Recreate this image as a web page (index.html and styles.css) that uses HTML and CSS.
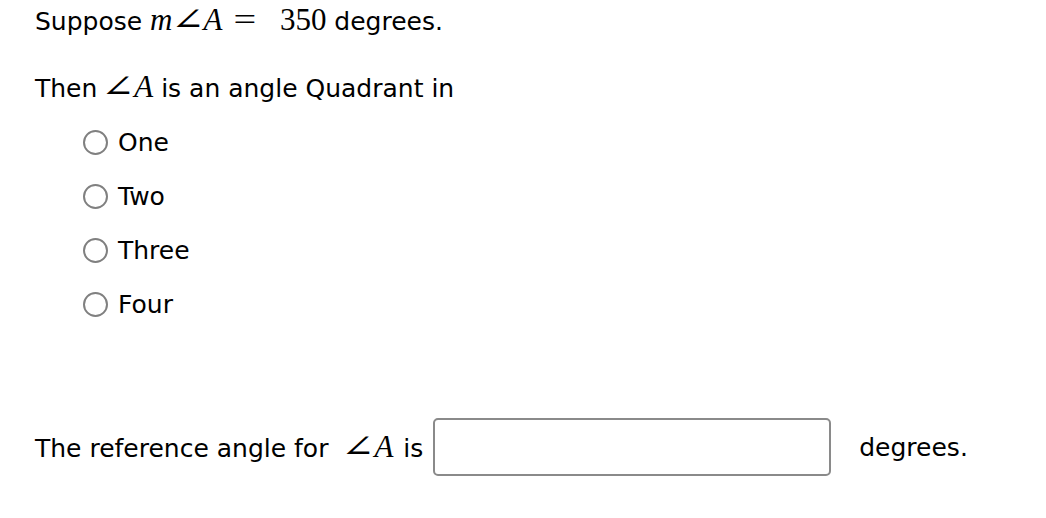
FILE: index.html
```html
<!DOCTYPE html>
<html>
<head>
<meta charset="utf-8">
<link rel="stylesheet" href="styles.css">
</head>
<body>
<div class="problem">
  <p class="line first">Suppose <span class="math"><i>m</i><span class="ang">∠</span><i>A</i><span class="op">=</span>350</span> degrees.</p>
  <p class="line second">Then <span class="math tight"><span class="ang">∠</span><i>A</i></span> is an angle Quadrant in</p>
  <ul class="choices">
    <li class="choice"><span class="radio"></span><span>One</span></li>
    <li class="choice"><span class="radio"></span><span>Two</span></li>
    <li class="choice"><span class="radio"></span><span>Three</span></li>
    <li class="choice"><span class="radio"></span><span>Four</span></li>
  </ul>
  <div class="answer-row">
    <span>The reference angle for <span class="math far"><span class="ang">∠</span><i>A</i></span> is</span>
    <span class="answer-box"></span>
    <span class="unit">degrees.</span>
  </div>
</div>
</body>
</html>
```
FILE: styles.css
```css
html, body {
  margin: 0;
  padding: 0;
  background: #fff;
}
body {
  font-family: "DejaVu Sans", "Open Sans", sans-serif;
  font-size: 25px;
  color: #000;
}
.problem {
  padding: 2px 0 0 35px;
}
.line {
  margin: 0;
  line-height: 40px;
}
.second {
  margin-top: 27px;
}
.math {
  font-family: "Liberation Serif", "DejaVu Serif", serif;
  font-size: 31px;
  line-height: 1;
}
.math i {
  font-style: italic;
}
.math.tight {
  margin-left: -2px;
}
.math.far {
  margin-left: 7px;
  margin-right: 2px;
}
.ang {
  display: inline-block;
  transform: scaleX(1.3);
  margin: 0 3px 0 2px;
}
.op {
  display: inline-block;
  margin: 0 26px 0 14px;
  transform: scaleX(1.3);
}
.choices {
  list-style: none;
  margin: 13px 0 0 48px;
  padding: 0;
  display: flex;
  flex-direction: column;
  gap: 14px;
}
.choice {
  display: flex;
  align-items: center;
  gap: 10px;
  height: 40px;
}
.radio {
  width: 25px;
  height: 25px;
  border: 2px solid #808080;
  border-radius: 50%;
  box-sizing: border-box;
}
.answer-row {
  display: flex;
  align-items: center;
  margin-top: 94px;
}
.answer-box {
  width: 398px;
  height: 58px;
  box-sizing: border-box;
  border: 2px solid #8a8a8a;
  border-radius: 5px;
  margin-left: 10px;
}
.unit {
  margin-left: 28px;
}
```
